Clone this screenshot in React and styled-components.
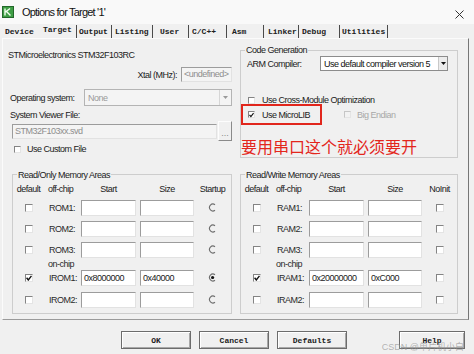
import React from 'react';
import styled, { createGlobalStyle } from 'styled-components';

const GlobalStyle = createGlobalStyle`
  html, body { margin: 0; padding: 0; background: #f0f0f0; }
  * { box-sizing: border-box; }
`;

const tabs = [
  { label: 'Device', w: 38, pad: 3 },
  { label: 'Target', w: 36, pad: 3, active: true },
  { label: 'Output', w: 35, pad: 2, bar: true },
  { label: 'Listing', w: 41, pad: 3, bar: true },
  { label: 'User', w: 36, pad: 7, bar: true },
  { label: 'C/C++', w: 38, pad: 3, bar: true },
  { label: 'Asm', w: 37, pad: 5, bar: true },
  { label: 'Linker', w: 35, pad: 4, bar: true },
  { label: 'Debug', w: 41, pad: 3, bar: true },
  { label: 'Utilities', w: 49, pad: 2, bar: true, end: true },
];

const romRows = [
  { name: 'ROM1:', top: 5 },
  { name: 'ROM2:', top: 5 },
  { name: 'ROM3:', top: 5 },
];
const iromRows = [
  { name: 'IROM1:', top: 0, on: true, start: '0x8000000', size: '0x40000', startup: true },
  { name: 'IROM2:', top: 6 },
];
const ramRows = [
  { name: 'RAM1:', top: 5 },
  { name: 'RAM2:', top: 5 },
  { name: 'RAM3:', top: 5 },
];
const iramRows = [
  { name: 'IRAM1:', top: 0, on: true, start: '0x20000000', size: '0xC000' },
  { name: 'IRAM2:', top: 6 },
];

const AppIcon = () => (
  <svg width="12" height="12" viewBox="0 0 12 12">
    <rect x="0.5" y="0.5" width="11" height="11" fill="#3f9e45" stroke="#23672a" />
    <path d="M3 2.5v7M3.5 6l4.5-3.5M4.5 5.5l4 4" stroke="#f4fff0" strokeWidth="1.4" fill="none" />
  </svg>
);

const CloseIcon = () => (
  <svg width="9" height="9" viewBox="0 0 9 9">
    <path d="M0.5 0.5l8 8M8.5 0.5l-8 8" stroke="#333" strokeWidth="1" />
  </svg>
);

const Tick = () => (
  <svg width="6" height="6" viewBox="0 0 6 6">
    <path d="M0.6 2.8l1.7 2.2L5.5 0.8" stroke="#111" strokeWidth="1.4" fill="none" />
  </svg>
);

const Radio = ({ on }) => (
  <svg width="9" height="9" viewBox="0 0 9 9">
    <path d="M7 1.8A3.4 3.4 0 1 0 7 7.2" stroke="#6e6e6e" strokeWidth="1.1" fill="none" />
    {on && <circle cx="4.6" cy="4.5" r="1.6" fill="#111" />}
  </svg>
);

const DownArrow = ({ color }) => (
  <svg width="5" height="3" viewBox="0 0 5 3">
    <path d="M0 0h5L2.5 3z" fill={color} />
  </svg>
);

const CheckBox = ({ on, size = 7, disabled }) => (
  <Check $s={size} $disabled={disabled}>
    {on && <Tick />}
  </Check>
);

const MemoryGroup = ({ legend, lastHead, rows, onchip, ram }) => (
  <Group $ml={ram ? 0 : 4} $w={ram ? 218 : 220} $pb={5}>
    <Legend $ml={4}>{legend}</Legend>
    <MemRow $top={2} $h={12}>
      <HeadCell $center>default</HeadCell>
      <HeadCell $pad={4}>off-chip</HeadCell>
      <HeadCell $center $padRight={4}>Start</HeadCell>
      <HeadCell $center>Size</HeadCell>
      <HeadCell $center>{lastHead}</HeadCell>
    </MemRow>
    {rows.map((r) => (
      <MemEntry key={r.name} row={r} ram={ram} />
    ))}
    <OnChip>on-chip</OnChip>
    {onchip.map((r) => (
      <MemEntry key={r.name} row={r} ram={ram} />
    ))}
  </Group>
);

const MemEntry = ({ row, ram }) => (
  <MemRow $top={row.top}>
    <Cell>
      <CheckBox size={8} on={row.on} />
    </Cell>
    <RowLabel>{row.name}</RowLabel>
    <Field $w={55} $h={16}>{row.start}</Field>
    <Field $w={54} $h={16}>{row.size}</Field>
    <Cell>{ram ? <CheckBox size={8} /> : <Radio on={row.startup} />}</Cell>
  </MemRow>
);

export default function App() {
  return (
    <>
      <GlobalStyle />
      <Window>
        <TitleBar>
          <AppIcon />
          <Title>Options for Target '1'</Title>
          <CloseButton>
            <CloseIcon />
          </CloseButton>
        </TitleBar>

        <TabRow>
          {tabs.map((t) => (
            <Tab key={t.label} $w={t.w} $pad={t.pad} $bar={t.bar} $end={t.end} $active={t.active}>
              {t.label}
            </Tab>
          ))}
        </TabRow>

        <Panel>
          <Column>
            <Line>STMicroelectronics STM32F103RC</Line>
            <XtalRow>
              <span>Xtal (MHz):</span>
              <Field $w={51} $h={15} $disabled>&lt;undefined&gt;</Field>
            </XtalRow>
            <OsRow>
              <FormLabel $w={76}>Operating system:</FormLabel>
              <SelectBox $w={148} $h={17} $disabled>
                None
                <DropButton $disabled>
                  <DownArrow color="#9a9a9a" />
                </DropButton>
              </SelectBox>
            </OsRow>
            <Line $top={3} $pad={2}>System Viewer File:</Line>
            <SvdRow>
              <Field $w={205} $h={15} $disabled>STM32F103xx.svd</Field>
              <BrowseButton>...</BrowseButton>
            </SvdRow>
            <CheckRow $top={2} $pad={6} $gap={6}>
              <CheckBox />
              <span>Use Custom File</span>
            </CheckRow>
          </Column>

          <Group $mt={-5} $w={218} $px={4} $pb={2}>
            <Legend>Code Generation</Legend>
            <CompilerRow>
              <FormLabel $w={75} $pad={2}>ARM Compiler:</FormLabel>
              <SelectBox $w={128} $h={15}>
                Use default compiler version 5
                <DropButton>
                  <DownArrow color="#111" />
                </DropButton>
              </SelectBox>
            </CompilerRow>
            <CheckRow $top={23} $pad={3} $gap={7}>
              <CheckBox />
              <span>Use Cross-Module Optimization</span>
            </CheckRow>
            <MicroRow>
              <Highlight>
                <CheckBox on />
                <span>Use MicroLIB</span>
              </Highlight>
              <DisabledOption>
                <CheckBox disabled />
                <span>Big Endian</span>
              </DisabledOption>
            </MicroRow>
            <Note>要用串口这个就必须要开</Note>
          </Group>

          <MemoryGroup
            legend="Read/Only Memory Areas"
            lastHead="Startup"
            rows={romRows}
            onchip={iromRows}
          />
          <MemoryGroup
            legend="Read/Write Memory Areas"
            lastHead="NoInit"
            rows={ramRows}
            onchip={iramRows}
            ram
          />
        </Panel>

        <ButtonRow>
          <DlgButton $w={70}>OK</DlgButton>
          <DlgButton $w={70}>Cancel</DlgButton>
          <DlgButton $w={70}>Defaults</DlgButton>
          <DlgButton $w={66} $ml={44}>Help</DlgButton>
          <Watermark>CSDN @单片机小白</Watermark>
        </ButtonRow>
      </Window>
    </>
  );
}

const Window = styled.div`
  position: relative;
  width: 474px;
  height: 354px;
  overflow: hidden;
  display: flex;
  flex-direction: column;
  background: #f0f0f0;
  color: #1b1b1b;
  font-family: "Liberation Sans", Arial, sans-serif;
  font-size: 9px;
  letter-spacing: -0.5px;
`;

const TitleBar = styled.div`
  flex: none;
  height: 24px;
  display: flex;
  align-items: center;
  padding: 0 10px 0 2px;
  background: #f9f9f9;
`;

const Title = styled.span`
  margin-left: 8px;
  font-size: 11px;
  letter-spacing: -0.8px;
  color: #111;
`;

const CloseButton = styled.span`
  display: flex;
  margin-left: auto;
  margin-top: 5px;
`;

const TabRow = styled.div`
  flex: none;
  height: 14px;
  display: flex;
  align-items: flex-end;
  padding-left: 2px;
  font-family: "Liberation Mono", monospace;
  font-size: 8px;
  font-weight: bold;
  letter-spacing: 0;
`;

const Tab = styled.div`
  width: ${(p) => p.$w}px;
  height: 13px;
  line-height: ${(p) => (p.$active ? 10 : 13)}px;
  padding-left: ${(p) => p.$pad}px;
  border-left: ${(p) => (p.$bar ? '1px solid #4a4a4a' : 'none')};
  border-right: ${(p) => (p.$end ? '1px solid #4a4a4a' : 'none')};
  color: #202020;
  white-space: nowrap;
`;

const Panel = styled.div`
  flex: none;
  height: 282px;
  margin: 0 5px 0 2px;
  padding: 10px 10px 0 5px;
  border: 1px solid;
  border-color: #fbfbfb #767676 #9a9a9a #fbfbfb;
  display: grid;
  grid-template-columns: 224px 218px;
  align-items: start;
  column-gap: 8px;
  row-gap: 5px;
`;

const Column = styled.div`
  display: flex;
  flex-direction: column;
`;

const Line = styled.div`
  margin-top: ${(p) => p.$top || 0}px;
  padding-left: ${(p) => p.$pad || 0}px;
  line-height: 12px;
  white-space: nowrap;
`;

const XtalRow = styled.div`
  margin-top: 6px;
  height: 15px;
  display: flex;
  justify-content: flex-end;
  align-items: center;
  gap: 4px;
`;

const OsRow = styled.div`
  margin-top: 7px;
  height: 17px;
  display: flex;
  align-items: center;
`;

const FormLabel = styled.span`
  flex: none;
  width: ${(p) => p.$w}px;
  padding-left: ${(p) => (p.$pad === undefined ? 2 : p.$pad)}px;
  white-space: nowrap;
`;

const Field = styled.div`
  flex: none;
  width: ${(p) => p.$w}px;
  height: ${(p) => p.$h}px;
  padding-left: 2px;
  line-height: ${(p) => p.$h - 2}px;
  border-top: 1px solid #9c9c9c;
  border-left: 1px solid #9c9c9c;
  border-right: 1px solid #e2e2e2;
  border-bottom: 1px solid #e2e2e2;
  background: ${(p) => (p.$disabled ? '#f4f4f4' : '#fff')};
  color: ${(p) => (p.$disabled ? '#8e8e8e' : '#222')};
  white-space: nowrap;
  overflow: hidden;
`;

const SelectBox = styled.div`
  flex: none;
  width: ${(p) => p.$w}px;
  height: ${(p) => p.$h}px;
  display: flex;
  align-items: center;
  padding-left: 3px;
  border: 1px solid ${(p) => (p.$disabled ? '#b4b4b4' : '#8c8c8c')};
  background: ${(p) => (p.$disabled ? '#f4f4f4' : '#fff')};
  color: ${(p) => (p.$disabled ? '#9a9a9a' : '#111')};
  white-space: nowrap;
`;

const DropButton = styled.span`
  margin-left: auto;
  width: ${(p) => (p.$disabled ? 12 : 9)}px;
  height: 100%;
  display: flex;
  align-items: center;
  justify-content: center;
  border-left: 1px solid ${(p) => (p.$disabled ? '#d6d6d6' : '#c8c8c8')};
  background: ${(p) => (p.$disabled ? '#f4f4f4' : '#ececec')};
`;

const SvdRow = styled.div`
  height: 20px;
  display: flex;
  align-items: center;
  padding-left: 4px;
  gap: 1px;
`;

const BrowseButton = styled.div`
  width: 14px;
  height: 20px;
  border: 1px solid;
  border-color: #fdfdfd #8a8a8a #8a8a8a #fdfdfd;
  background: #f0f0f0;
  color: #8a8a8a;
  text-align: center;
  line-height: 22px;
  letter-spacing: 0;
`;

const CheckRow = styled.div`
  margin-top: ${(p) => p.$top}px;
  height: 12px;
  display: flex;
  align-items: center;
  padding-left: ${(p) => p.$pad}px;
  gap: ${(p) => p.$gap}px;
  white-space: nowrap;
`;

const Check = styled.span`
  flex: none;
  width: ${(p) => p.$s}px;
  height: ${(p) => p.$s}px;
  display: inline-flex;
  align-items: center;
  justify-content: center;
  border-top: 1px solid ${(p) => (p.$disabled ? '#c6c6c6' : '#848484')};
  border-left: 1px solid ${(p) => (p.$disabled ? '#c6c6c6' : '#848484')};
  border-right: 1px solid #e4e4e4;
  border-bottom: 1px solid #e4e4e4;
  background: ${(p) => (p.$disabled ? '#f2f2f2' : '#fff')};
`;

const Group = styled.fieldset`
  width: ${(p) => p.$w}px;
  min-width: 0;
  margin: ${(p) => p.$mt || 0}px 0 0 ${(p) => p.$ml || 0}px;
  padding: 0 ${(p) => p.$px || 0}px ${(p) => p.$pb}px;
  border: 1px solid #cdcdcd;
`;

const Legend = styled.legend`
  margin-left: ${(p) => p.$ml || 0}px;
  padding: 0 1px;
  line-height: 12px;
  white-space: nowrap;
`;

const CompilerRow = styled.div`
  height: 15px;
  display: flex;
  align-items: center;
`;

const MicroRow = styled.div`
  margin-top: -2px;
  display: flex;
  align-items: center;
`;

const Highlight = styled.div`
  flex: none;
  width: 81px;
  height: 21px;
  margin-left: -4px;
  display: flex;
  align-items: center;
  gap: 7px;
  padding-left: 5px;
  border: 2px solid #e1261c;
  white-space: nowrap;
`;

const DisabledOption = styled.div`
  margin-left: 22px;
  display: flex;
  align-items: center;
  gap: 6px;
  color: #a8a8a8;
`;

const Note = styled.div`
  margin: 12px 0 0 -4px;
  height: 18px;
  line-height: 18px;
  font-family: "Noto Sans CJK SC", sans-serif;
  font-size: 16px;
  letter-spacing: 0;
  color: #e3261c;
  white-space: nowrap;
`;

const MemRow = styled.div`
  margin-top: ${(p) => p.$top || 0}px;
  height: ${(p) => p.$h || 16}px;
  display: grid;
  grid-template-columns: 31px 37px 59px 54px 1fr;
  align-items: center;
`;

const HeadCell = styled.span`
  padding-left: ${(p) => p.$pad || 0}px;
  padding-right: ${(p) => p.$padRight || 0}px;
  text-align: ${(p) => (p.$center ? 'center' : 'left')};
  white-space: nowrap;
`;

const Cell = styled.div`
  display: flex;
  justify-content: center;
  align-items: center;
`;

const RowLabel = styled.span`
  padding-left: 5px;
  color: #2a2a2a;
  white-space: nowrap;
`;

const OnChip = styled.div`
  height: 12px;
  line-height: 12px;
  padding-left: 35px;
  color: #2a2a2a;
`;

const ButtonRow = styled.div`
  position: relative;
  flex: 1;
  display: flex;
  justify-content: flex-end;
  align-items: flex-start;
  gap: 8px;
  padding: 11px 9px 0 0;
`;

const DlgButton = styled.button`
  width: ${(p) => p.$w}px;
  height: 18px;
  margin-left: ${(p) => p.$ml || 0}px;
  padding: 0;
  border: 1px solid #6c6c6c;
  background: #f0f0f0;
  box-shadow: inset 1px 1px #ffffff, inset -1px -1px #a8a8a8;
  font-family: "Liberation Mono", monospace;
  font-size: 8px;
  font-weight: bold;
  color: #202020;
`;

const Watermark = styled.span`
  position: absolute;
  right: 10px;
  bottom: 1px;
  font-family: "Liberation Sans", "Noto Sans CJK SC", sans-serif;
  font-size: 9px;
  letter-spacing: 0;
  color: rgba(150, 150, 150, 0.7);
  pointer-events: none;
`;
